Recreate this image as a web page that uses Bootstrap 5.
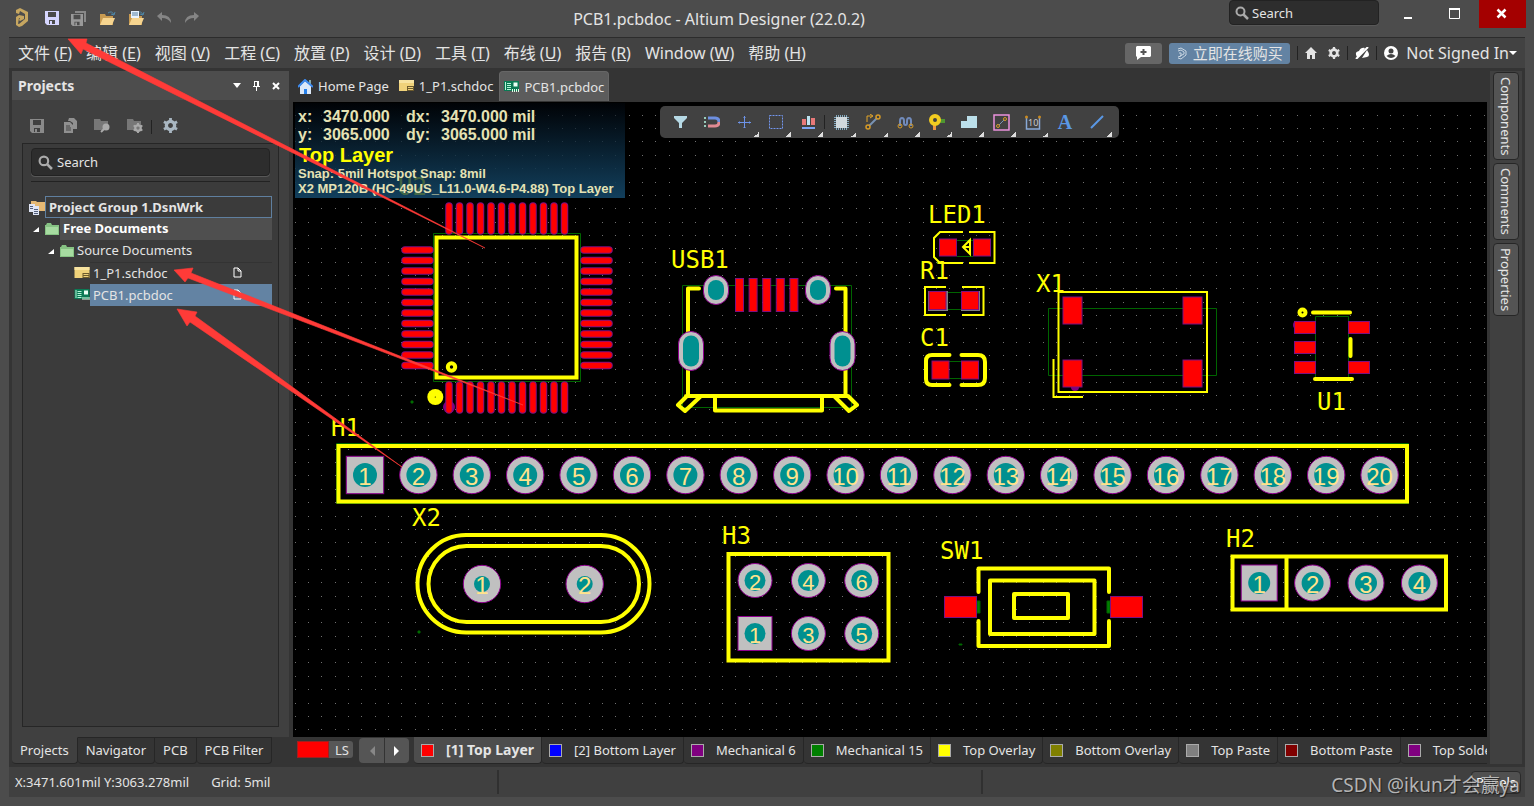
<!DOCTYPE html>
<html lang="zh-CN">
<head>
<meta charset="utf-8">
<meta name="viewport" content="width=device-width, initial-scale=1">
<title>PCB1.pcbdoc - Altium Designer (22.0.2)</title>
<link href="https://cdn.jsdelivr.net/npm/bootstrap@5.3.0/dist/css/bootstrap.min.css" rel="stylesheet">
<style>
:root{--frame:#4c4c4c;--bar:#404040;--deep:#343434;--line:#262626;--blue:#6383a3;--ink:#e4e4e4}
body{background:var(--frame);color:var(--ink);font:13px/20px "Noto Sans","Noto Sans CJK SC",sans-serif;min-height:100vh;overflow-x:hidden}
button{font:inherit;color:inherit;background:none;border:0;padding:0}
a{color:inherit;text-decoration:none}
svg{display:block;flex-shrink:0}
input{font:inherit;color:var(--ink);background:none;border:0;outline:0;min-width:0;padding:0}
input::placeholder{color:var(--ink);opacity:1}
.titlebar{height:37px;padding-left:14px;padding-right:8px}
.titlebar h1{font-size:16px;line-height:20px;margin:0;padding-right:96px;top:9px;left:0;right:0;pointer-events:none}
.quick{gap:12px}
.quick button:first-of-type{margin-left:1px}
.find{background:#2d2d2d;border:1px solid #222;border-radius:4px;box-shadow:0 1px 0 #585858}
.find input{line-height:18px}
.find-top{width:150px;height:25px;padding-left:5px;gap:3px;margin-right:6px}
.winbtn{width:47px;height:28px}
.shell{margin:0 9px;background:var(--deep)}
.menubar{height:31px;background:#424242;border-top:1px solid #2c2c2c;padding:0 8px 0 9px;font-size:16px}
.menus{gap:14px}
.account{gap:7px}
.chip{height:21px;border-radius:3px;background:#666}
.buy{background:var(--blue);width:121px;gap:6px;font-size:15px}
.rule{width:1px;height:14px;background:#222}
.work{padding:3px;gap:4px}
.side{width:277px}
.side-head{height:29px;background:#4d4d4d;padding:0 9px 0 6px;font-size:14px;gap:12px}
.side-body{background:var(--bar);padding:10px}
.side-tools{height:33px;gap:16px;padding-left:8px}
.side-tools button{margin-bottom:2px}
.side-tools .rule{margin-left:-8px;margin-right:-5px}
.tree-box{border:1px solid var(--line);background:#3b3b3b;padding:4px 6px}
.find-tree{height:28px;padding-left:6px;gap:4px;margin:0 2px}
.tree-rule{height:1px;background:#222;margin:5px 2px 14px}
.tree-row{height:22px}
.tree-row>.cell-fill{height:22px;padding-left:3px;flex:1 1 auto}
.doc-row{padding-left:45px}
.doc-row .cell-fill{border-top:1px solid #333;padding-right:30px;padding-bottom:2px}
.doc-row.on .cell-fill{background:var(--blue);border-color:var(--blue)}
.tabs button{height:27px;border:1px solid var(--line);border-left-width:0;border-radius:0 0 4px 4px;padding:0 8px 2px;background:var(--deep)}
.tabs button.on{background:var(--bar);border-top-color:transparent}
.doc-tabs{height:31px;padding-right:2px}
.doc-tab{height:30px;padding:0 5px;gap:5px}
.doc-tab.on{background:#5c5c5c;border:1px solid #666;border-bottom:0;border-radius:4px 4px 0 0;padding:0 4px;margin-left:1px}
.board{background:#000}
.hud{left:2px;top:1px;width:330px;height:95px;padding:5px 3px;background:linear-gradient(rgba(0,4,10,.6),#123f5c);color:#e5e2b4;font:bold 16px/18px "Liberation Sans",sans-serif}
.hud .xy{display:grid;grid-template-columns:25px 83px 35px auto;justify-content:start}
.hud .lay{font-size:20px;line-height:22px;color:#ff0;padding-left:1px}
.hud .sub{font-size:13px;line-height:15px;white-space:nowrap}
.tools{left:367px;top:4px;height:32px;width:459px;background:#414141;border-radius:5px;padding:0 4px}
.tools button{width:32px;height:32px}
.tools button svg{margin:0 auto}
.tools .more::after{content:"";position:absolute;right:1px;bottom:1px;width:5px;height:5px;background:linear-gradient(135deg,transparent 50%,#ddd 50%)}
.tools .letter{font:bold 20px/32px "Liberation Serif",serif;color:#5a98e5}
.layer-bar{height:27px;overflow:hidden}
.ls{width:57px;height:17px;margin:4px 5px 0 4px}
.ls span{width:24px;background:#575757;border-radius:0 3px 3px 0;padding-left:2px;line-height:18px}
.ls i{width:32px;background:red;border:1px solid #a02020}
.pager{width:50px;height:25px;margin-top:1px;margin-right:5px;background:#555;border-radius:4px}
.pager button{width:25px}
.pager button+button{border-left:1px solid #333}
.layer{height:27px;border-right:1px solid var(--line);border-bottom:1px solid var(--line);border-radius:0 0 4px 4px;padding:0 7px;gap:12px;white-space:nowrap;flex-shrink:0}
.layer.on{background:#4d4d4d;font-weight:bold;font-size:14px}
.layer i{width:13px;height:13px;border:1px solid #aaa}
.dock{width:32px;background:var(--bar);margin-left:-1px;padding:1px 3px;gap:3px}
.dock button{writing-mode:vertical-rl;width:26px;border:1px solid #262626;border-radius:4px;background:#545454;line-height:24px;padding:4px 0}
.status{height:30px;background:var(--bar);padding:0 4px 0 6px}
.status .rule{width:2px;height:24px;background:#303030}
.coords{width:32%;gap:22px;white-space:nowrap}
.hint{width:32%}
.panels{width:50px;height:23px;background:#505050;border:1px solid #2a2a2a;border-radius:4px;color:#fff}
.mark-text{right:14px;bottom:9px;font-size:19px;line-height:24px;color:rgba(205,205,205,.85);text-shadow:1px 1px 1px #222;pointer-events:none}
.notes{left:0;top:0;width:100%;pointer-events:none}
.foot{height:9px}
.lbl{font:24px "DejaVu Sans Mono",monospace;fill:#ff0}
.num{font:24px "Liberation Sans",sans-serif;fill:#ffe38c;text-anchor:middle}
.num.sm{font-size:22px}
.pad{fill:red;stroke:#7d1080}
.hole{fill:silver;stroke:#8e008e}
.drill{fill:#009090}
.silk{fill:none;stroke:#ff0;stroke-width:4;stroke-linejoin:round;stroke-linecap:round}
.silk.sharp{stroke-linejoin:miter}
.thin{fill:none;stroke:#ff0;stroke-width:2}
.body3{fill:none;stroke:#006400;stroke-width:1}
.ghost{fill:#6a8a3a;opacity:.55}
</style>
</head>
<body class="d-flex flex-column position-relative">
<svg width="0" height="0" class="position-absolute" aria-hidden="true">
 <symbol id="disk" viewBox="0 0 14 14"><path fill="currentColor" fill-rule="evenodd" d="M0 0h14v14H2l-2-2zM3 1v5h8V1zM4 9v4h6V9zM5 10h2v3H5z"/></symbol>
 <symbol id="sch" viewBox="0 0 15 12"><path d="M0 0h15v11H0z" fill="#f0d27a"/><path d="M0 0h15v3H0z" fill="#f7e3a0"/><path d="M8 6h7v5H8z" fill="#6c5a2c"/><path d="M9 7h5v1H9zM9 9h5v1H9z" fill="#f0d27a"/></symbol>
 <symbol id="pcb" viewBox="0 0 15 12"><path d="M0 0h15v10H0z" fill="#0b7a55"/><path d="M1.500 1v8M3 2.500h4M3 4.500h4M3 6.500h4M3 8.500h4" stroke="#b5f5d8" fill="none"/><path d="M9.500 1.500h4v4h-4z" fill="#eafff5"/><path d="M8.500 8v3M10.500 8v3M12.500 8v3M14.500 8v3" stroke="#dfffe8"/></symbol>
 <symbol id="lens" viewBox="0 0 14 14"><circle cx="5.500" cy="5.500" r="4" fill="none" stroke="#aaa" stroke-width="2"/><path d="M8.500 8.500l4.500 4.500" stroke="#aaa" stroke-width="2.500"/></symbol>
 <symbol id="gear" viewBox="-8 -8 16 16"><circle r="4.400" fill="none" stroke="currentColor" stroke-width="3.600"/><g stroke="currentColor" stroke-width="3"><path d="M0-8v3M0 5v3M-7-4l2.600 1.500M4.400 2.500l2.600 1.500M-7 4l2.600-1.500M4.400-2.500l2.600-1.500"/></g></symbol>
 <symbol id="folder" viewBox="0 0 14 12"><path d="M0 2h1l1-2h4l1 2h7v10H0z" fill="#86c283"/><path d="M1 4h12v7H1z" fill="#a6dba0"/></symbol>
 <symbol id="house" viewBox="0 0 12 12"><path d="M6 0l6 6h-2v6H7V8H5v4H2V6H0z" fill="currentColor"/></symbol>
 <symbol id="open" viewBox="0 0 17 15"><path d="M1 3h5l1 2h7v9H1z" fill="#c99b51"/><path d="M4 7h12l-3 7H1z" fill="#f6d48f"/><path d="M9 2q4-3 6 2m0 0l1-3m-1 3l-3-1" stroke="#4e87a8" fill="none"/></symbol>
</svg>

<header class="titlebar d-flex align-items-start position-relative">
 <h1 class="position-absolute text-center fw-normal">PCB1.pcbdoc - Altium Designer (22.0.2)</h1>
 <div class="quick d-flex align-items-center pt-2">
  <svg width="18" height="20" viewBox="0 0 18 20"><path d="M2 5V2l4-2 8 4v9l-6 5-3 1-3-2v-2l3 1 6-5V6L6 3 5 6zM2 9l3-2 5 1v3l-4 2-1-1 1-2H5l-1 6-2-1z" fill="#c6a660"/></svg>
  <button aria-label="Save" style="color:#d6d6ff"><svg width="14" height="14"><use href="#disk"/></svg></button>
  <button aria-label="Save all" style="color:#999"><svg width="16" height="16" viewBox="0 0 16 16"><path d="M4 1h11v11h-2V3H4z" fill="#888"/><svg y="4" width="12" height="12"><use href="#disk"/></svg></svg></button>
  <button aria-label="Open"><svg width="17" height="15"><use href="#open"/></svg></button>
  <button aria-label="Open project"><svg width="17" height="15" viewBox="0 0 17 15"><use href="#open"/><path d="M3 0h8v7H3z" fill="#e9f4ff"/><path d="M4 2h6M4 4h6" stroke="#557fa0"/></svg></button>
  <button aria-label="Undo"><svg width="15" height="12" viewBox="0 0 15 12"><path d="M0 4l5-4v3q9 0 9 8-3-5-9-5v3z" fill="#858585"/></svg></button>
  <button aria-label="Redo"><svg width="15" height="12" viewBox="0 0 15 12"><path d="M15 4l-5-4v3Q1 3 1 11q3-5 9-5v3z" fill="#858585"/></svg></button>
 </div>
 <label class="find find-top d-flex align-items-center ms-auto position-relative"><svg width="14" height="14"><use href="#lens"/></svg><input class="flex-fill" type="search" placeholder="Search" aria-label="Search"></label>
 <button class="winbtn" aria-label="Minimize"><svg width="47" height="28"><path d="M19 18h8" stroke="#fff" stroke-width="2"/></svg></button>
 <button class="winbtn" aria-label="Maximize"><svg width="47" height="28"><path d="M17.500 9.500h10v9h-10z" fill="none" stroke="#fff"/><path d="M17 9h11" stroke="#fff" stroke-width="2"/></svg></button>
 <button class="winbtn" aria-label="Close" style="background:#a40000"><svg width="47" height="28"><path d="M18.500 9.500l8 8m0-8l-8 8" stroke="#fff" stroke-width="2.500"/></svg></button>
</header>

<div class="shell d-flex flex-column flex-fill">
 <nav class="menubar d-flex align-items-center">
  <div class="menus d-flex" id="menus"></div>
  <div class="account d-flex align-items-center ms-auto">
   <button class="chip px-2" aria-label="Feedback" style="width:37px"><svg class="m-auto" width="17" height="14" viewBox="0 0 17 14"><path d="M2 0h13l1 1v9l-1 1H6l-4 3v-3l-1-1V1z" fill="#fff"/><path d="M8.500 3v6M5.500 6h6" stroke="#555" stroke-width="2"/></svg></button>
   <button class="chip buy d-flex align-items-center justify-content-center"><svg width="10" height="13" viewBox="0 0 10 13"><path d="M1 2l3-1 5 3v4l-5 4-3-1M1 4l3-1 3 2v2L3 9M2 6h2v3l-3 1" stroke="#c9d6e2" fill="none"/></svg>立即在线购买</button>
   <span class="rule"></span>
   <button aria-label="Home"><svg width="12" height="12"><use href="#house"/></svg></button>
   <button aria-label="Settings" class="ms-1"><svg width="12" height="12"><use href="#gear"/></svg></button>
   <span class="rule"></span>
   <button aria-label="Offline"><svg width="14" height="12" viewBox="0 0 14 12"><path d="M2 10q-3-5 2-6 2-4 6-3L4 10zM7 11l5-8q4 6 0 7z" fill="#fff"/><path d="M1 12L13 0" stroke="#fff" stroke-width="2"/></svg></button>
   <span class="rule"></span>
   <button class="d-flex align-items-center"><svg class="me-2" width="14" height="14" viewBox="0 0 14 14"><circle cx="7" cy="7" r="7" fill="#fff"/><circle cx="7" cy="5" r="2.500" fill="#424242"/><path d="M2.500 10q4.500-4 9 0-4.500 4-9 0" fill="#424242"/></svg>Not Signed In<svg width="8" height="5"><path d="M0 0h8L4 4z" fill="#fff"/></svg></button>
  </div>
 </nav>

 <main class="work d-flex align-items-stretch flex-fill">
  <aside class="side d-flex flex-column flex-shrink-0">
   <div class="side-head d-flex align-items-center"><b class="me-auto">Projects</b>
    <button aria-label="Menu"><svg width="8" height="6"><path d="M0 0h8L4 5z" fill="#fff"/></svg></button>
    <button aria-label="Pin"><svg width="7" height="10" viewBox="0 0 7 10"><path d="M1 0h5v5h1v1H4v4H3V6H0V5h1zM2 1v4h2V1z" fill="#fff"/></svg></button>
    <button aria-label="Close panel"><svg width="8" height="8"><path d="M1 1l6 6m0-6L1 7" stroke="#fff" stroke-width="2"/></svg></button></div>
   <div class="side-body d-flex flex-column flex-fill">
    <div class="side-tools d-flex align-items-center" style="color:#8a8a8a">
     <button aria-label="Save document"><svg width="14" height="14"><use href="#disk"/></svg></button>
     <button aria-label="Compile"><svg class="ms-1" width="14" height="15" viewBox="0 0 14 15"><path d="M5 0h5l3 3v8H9V5L6 3H4zM0 4h6l3 3v8H0z" fill="#909090"/><path d="M2 8h4M2 10h5M2 12h5" stroke="#444"/></svg></button>
     <button aria-label="Explore"><svg width="17" height="14" viewBox="0 0 17 14"><path d="M0 0h6l1 2h7v9H0z" fill="#777"/><circle cx="12" cy="8" r="3.500" fill="#aaa"/><path d="M10 10l-3 3" stroke="#aaa" stroke-width="2"/></svg></button>
     <button aria-label="Options"><svg width="16" height="14" viewBox="0 0 16 14"><path d="M0 0h6l1 2h7v9H0z" fill="#777"/><svg x="6" y="4" width="10" height="10" color="#aaa"><use href="#gear"/></svg></svg></button>
     <span class="rule"></span>
     <button aria-label="Panel settings" style="color:#a9b7c2"><svg width="15" height="15"><use href="#gear"/></svg></button>
    </div>
    <div class="tree-box flex-fill">
     <label class="find find-tree d-flex align-items-center"><svg width="15" height="15"><use href="#lens"/></svg><input type="search" class="flex-fill" placeholder="Search" aria-label="Search projects"></label>
     <div class="tree-rule"></div>
     <div class="tree-row d-flex align-items-center fw-bold"><svg width="16" height="15" viewBox="0 0 16 15"><path d="M2 1h5l1 1h8v9H2z" fill="#e5b873"/><path d="M0 4h6v8H0zM4 6h6v9H4z" fill="#dfe5f5"/><path d="M1 6.500h3M1 8.500h3M5 9.500h4M5 11.500h4M5 13.500h4" stroke="#53607c"/></svg><span class="cell-fill" style="border:1px solid #5f7f9f">Project Group 1.DsnWrk</span></div>
     <div class="tree-row d-flex align-items-center fw-bold text-white"><svg width="16" height="12"><path d="M10 4v5H4z" fill="#fff"/></svg><svg class="me-1" width="14" height="12"><use href="#folder"/></svg><span class="cell-fill" style="background:#4f4f4f;margin-left:-3px">Free Documents</span></div>
     <div class="tree-row d-flex align-items-center"><svg width="31" height="12"><path d="M25 4v5h-6z" fill="#fff"/></svg><svg width="14" height="12"><use href="#folder"/></svg><span class="cell-fill">Source Documents</span></div>
     <div class="tree-row doc-row d-flex align-items-center"><svg width="16" height="12"><use href="#sch"/></svg><span class="cell-fill d-flex align-items-center">1_P1.schdoc<svg class="ms-auto" width="9" height="11"><path d="M1 1h4l3 3v6H1zM5 1v3h3" fill="none" stroke="#fff"/></svg></span></div>
     <div class="tree-row doc-row on d-flex align-items-center"><svg width="16" height="12"><use href="#pcb"/></svg><span class="cell-fill d-flex align-items-center">PCB1.pcbdoc<svg class="ms-auto" width="9" height="11"><path d="M1 1h4l3 3v6H1zM5 1v3h3" fill="none" stroke="#fff"/></svg></span></div>
    </div>
   </div>
   <div class="tabs d-flex"><button class="on">Projects</button><button>Navigator</button><button>PCB</button><button>PCB Filter</button></div>
  </aside>

  <section class="flex-fill d-flex flex-column" style="min-width:0">
   <div class="doc-tabs d-flex align-items-start">
    <button class="doc-tab d-flex align-items-center"><svg width="15" height="15" viewBox="0 0 15 15"><path d="M2 7l5-5 6 5v8H2z" fill="#dce8f8"/><path d="M11 1h2v5h-2z" fill="#8aa"/><path d="M0 8l7-7 8 7" fill="none" stroke="#3d8bf0" stroke-width="2"/><path d="M6 10h3v5H6z" fill="#2680eb"/></svg>Home Page</button>
    <button class="doc-tab d-flex align-items-center"><svg width="15" height="12"><use href="#sch"/></svg>1_P1.schdoc</button>
    <button class="doc-tab on d-flex align-items-center"><svg width="15" height="12"><use href="#pcb"/></svg>PCB1.pcbdoc</button>
   </div>
   <div class="board position-relative flex-fill">
    <svg id="pcbview" class="w-100" viewBox="293 102 1194 635" preserveAspectRatio="xMinYMin meet">
     <path id="dots" stroke="#707070" fill="none" shape-rendering="crispEdges"/>
     <g class="body3">
      <path d="M433.500 233.500h147v148h-147zM682.500 285.500h169v122h-169zM957 240.500h16M957 256.500h16M946 292.500h16M946 309.500h16M949 361.500h13M949 378.500h13M1048.500 308.500h168v67h-168zM1315.500 316.500h33v61h-33zM336.500 443.500h1072v60h-1072z"/>
      <path d="M977 601h3v12h-3zM1107 601h3v12h-3z" fill="#008000"/><path d="M411 401h2v2h-2zM418 631h2v2h-2zM959 644h3v1h-3z" fill="#008000"/>
     </g>
     <g fill="#80007f"><circle cx="449" cy="407" r="6"/><circle cx="1075" cy="387" r="4"/><circle cx="1297" cy="325" r="4"/></g>
     <g class="silk sharp"><path d="M436.500 237.500h140v140h-140zM338.500 446h1068.500v55.500H338.500zM728.500 554h160v106.500h-160zM1232.500 556.500h213.500v53h-213.500zM1286.500 557v52"/></g>
     <g class="silk">
      <path d="M699 288.500h-11V395M836 288.500h9.500V395M686 396h162M715 396v14.500h107V396M686 397l-8 8 7 6 15-14M848 396l9 9-8 6-14-14"/>
      <path d="M949.500 355H932q-6 0-6 6v18q0 6 6 6h17.500M961.500 355H978q7 0 7 7v16q0 7-7 7h-16.500"/>
      <path d="M1313 312.500h37M1315 379h37M1350.500 339v17"/>
      <rect x="417.500" y="535" width="232" height="97.500" rx="48.700"/><rect x="428.500" y="546" width="210.500" height="76" rx="38"/>
      <path d="M978.500 592v-23.500h130.500V592M978.500 621v25h130.500v-25M990 580.500h104.500v53.500H990zM1014 594h54v24h-54z"/>
      <circle cx="451.500" cy="367" r="3.700"/><circle cx="1302.500" cy="312.500" r="3"/>
     </g>
     <circle cx="435.300" cy="397" r="8" fill="#ff0"/><circle cx="435.300" cy="397" r=".6"/>
     <g class="thin"><path d="M963 232h-23l-6 6v19l6 6h23M969 232h25.500v31H969M946 287h-21v28h21M962 287h21.500v28H962M1058.500 292h148.500v100h-148.500zM1053.500 359v38h29.500M963 247l7-7v14zM963 247h7"/></g>
     <path d="M928 291h20v20h-20zM961 291h19v20h-19z" fill="#808080"/>
     <g id="pads"></g>
     <g class="lbl"><text x="671" y="268">USB1</text><text x="928" y="223">LED1</text><text x="920" y="279">R1</text><text x="920" y="346">C1</text><text x="1036" y="292">X1</text><text x="1317" y="410">U1</text><text x="331" y="436">H1</text><text x="412" y="526">X2</text><text x="722" y="544">H3</text><text x="940" y="559">SW1</text><text x="1226" y="547">H2</text></g>
    </svg>
    <div class="hud position-absolute">
     <svg class="position-absolute top-0 start-0" width="330" height="95"><text x="103" y="92" class="lbl ghost">U2</text></svg>
     <div class="position-relative">
      <div class="xy"><span>x:</span><span>3470.000</span><span>dx:</span><span>3470.000 mil</span><span>y:</span><span>3065.000</span><span>dy:</span><span>3065.000 mil</span></div>
      <div class="lay">Top Layer</div><div class="sub">Snap: 5mil Hotspot Snap: 8mil</div><div class="sub">X2 MP120B (HC-49US_L11.0-W4.6-P4.88) Top Layer</div>
     </div>
    </div>
    <div class="tools position-absolute d-flex align-items-center">
     <button aria-label="Filter"><svg width="13" height="12" viewBox="0 0 13 12"><path d="M0 0h13v2L8 7v5H5V7L0 2z" fill="#b6d9e5"/></svg></button>
     <button aria-label="Snap"><svg width="16" height="13" viewBox="0 0 16 13"><path d="M4 2h7q4 0 4 4" stroke="#6d8fe0" stroke-width="3" fill="none"/><path d="M15 6q0 4-4 4H4" stroke="#e08a93" stroke-width="3" fill="none"/><path d="M1 1v2M1 5v2M1 9v2" stroke="#9cb" stroke-width="2"/></svg></button>
     <button class="more position-relative" aria-label="Place"><svg width="14" height="14"><path d="M7.500 1v12M1 7.500h13" stroke="#6d93e8"/><path d="M6 2.500h3M6 12.500h3M2.500 6v3M12.500 6v3" stroke="#6d93e8" stroke-opacity=".5"/></svg></button>
     <button class="more position-relative" aria-label="Select"><svg width="15" height="15"><path d="M.5.500h13v13H.5z" fill="none" stroke="#7396ee" stroke-dasharray="2 1"/></svg></button>
     <button class="more position-relative" aria-label="Align"><svg width="13" height="13"><path d="M0 3h4v6H0zM9 2h4v7H9z" fill="#e87979"/><path d="M5 0h3v9H5z" fill="#bce3f1"/><path d="M0 12h13" stroke="#7da5f5" stroke-width="2"/></svg></button>
     <span class="rule"></span>
     <button class="more position-relative" aria-label="Component"><svg width="15" height="15"><path d="M2.500 0v15M4.500 0v15M6.500 0v15M8.500 0v15M10.500 0v15M12.500 0v15M0 2.500h15M0 4.500h15M0 6.500h15M0 8.500h15M0 10.500h15M0 12.500h15" stroke="#85abc0"/><path d="M2 2h11v11H2z" fill="#d1d9dd"/></svg></button>
     <button class="more position-relative" aria-label="Route"><svg width="16" height="16"><path d="M2 8V2h5M5 0l3 2-3 2" stroke="#e1a52b" fill="none"/><path d="M4 12l8-8" stroke="#7892b4" stroke-width="2"/><g fill="none" stroke="#d69a26" stroke-width="1.500"><circle cx="3" cy="13" r="2"/><circle cx="13" cy="3" r="2"/></g></svg></button>
     <button class="more position-relative" aria-label="Tune"><svg width="17" height="13"><path d="M3 10V5q0-3 2-3t2 3v2q0 2 1.500 2T10 7V5q0-3 2-3t2 3v5" stroke="#718bbb" stroke-width="2" fill="none"/><g fill="none" stroke="#d69a26"><circle cx="3" cy="10" r="2"/><circle cx="14" cy="10" r="2"/></g></svg></button>
     <button class="more position-relative" aria-label="Via"><svg width="17" height="16"><path d="M9 5h7v4H9z" fill="#4e9631"/><path d="M4 10h3v6H4z" fill="#ed9641"/><circle cx="6" cy="6" r="4" fill="none" stroke="#f3cc20" stroke-width="4"/></svg></button>
     <button class="more position-relative" aria-label="Polygon"><svg width="16" height="12"><path d="M0 5h6V0h10v12H0z" fill="#bbdfea"/></svg></button>
     <button class="more position-relative" aria-label="Keepout"><svg width="17" height="17"><path d="M1 1h15v15H1z" fill="none" stroke="#ea91dc" stroke-width="1.500"/><path d="M6 11l5-5" stroke="#7892b4"/><g fill="none" stroke="#d69a26"><circle cx="5" cy="12" r="1.500"/><circle cx="12" cy="5" r="1.500"/></g></svg></button>
     <button class="more position-relative" aria-label="Dimension"><svg width="16" height="15"><path d="M1.500 3v11h13V3" fill="none" stroke="#88a9d7" stroke-width="1.500"/><circle cx="1.500" cy="2" r="1.500" fill="#c98b20"/><circle cx="14.500" cy="2" r="1.500" fill="#c98b20"/><text x="3" y="11" font-size="9" fill="#ccc">10</text></svg></button>
     <button class="letter" aria-label="Text">A</button>
     <button class="more position-relative" aria-label="Line"><svg width="14" height="14"><path d="M1 13L13 1" stroke="#5a98e5" stroke-width="2"/></svg></button>
    </div>
   </div>
   <div class="layer-bar d-flex align-items-start">
    <button class="ls d-flex flex-shrink-0" aria-label="Layer set"><i></i><span>LS</span></button>
    <div class="pager d-flex flex-shrink-0"><button aria-label="Previous"><svg class="m-auto" width="6" height="10"><path d="M6 0v10L1 5z" fill="#888"/></svg></button><button aria-label="Next"><svg class="m-auto" width="6" height="10"><path d="M0 0v10l5-5z" fill="#fff"/></svg></button></div>
    <div id="layers" class="d-flex"></div>
   </div>
  </section>

  <div class="dock d-flex flex-column align-items-start flex-shrink-0"><button>Components</button><button>Comments</button><button>Properties</button></div>
 </main>

 <footer class="status d-flex align-items-center"><div class="coords d-flex"><span>X:3471.601mil Y:3063.278mil</span><span>Grid: 5mil</span></div><span class="rule"></span><span class="hint"></span><span class="rule"></span><button class="panels ms-auto">Panels</button></footer>
</div>
<div class="foot"></div>

<svg class="notes position-absolute" viewBox="0 0 1534 806" fill="#ff3b38" stroke="#ff3b38" stroke-width=".6" aria-hidden="true">
 <path d="M68 39l19 0-1 4L485 248 83 49l-2 5z"/><path d="M174 270l19-2-2 5 332 132L188 278l-3 4z"/><path d="M177 309l20 3-2 4 207 151L190 322l-3 4z"/>
</svg>
<div class="mark-text position-absolute">CSDN @ikun才会赢ya</div>

<script src="https://cdn.jsdelivr.net/npm/bootstrap@5.3.0/dist/js/bootstrap.bundle.min.js"></script>
<script>
const menus = [['文件','F'],['编辑','E'],['视图','V'],['工程','C'],['放置','P'],['设计','D'],['工具','T'],['布线','U'],['报告','R'],['Window','W'],['帮助','H']];
document.getElementById('menus').innerHTML = menus.map(([n,k]) => `<a href="#">${n} (<u>${k}</u>)</a>`).join('');

const layers = [['[1] Top Layer','#f00'],['[2] Bottom Layer','#00f'],['Mechanical 6','#800080'],['Mechanical 15','#008000'],['Top Overlay','#ff0'],['Bottom Overlay','#808000'],['Top Paste','#808080'],['Bottom Paste','#800000'],['Top Solder','#800080']];
document.getElementById('layers').innerHTML = layers.map(([n,c],i) => `<button class="layer d-flex align-items-center ${i?'':'on'}"><i style="background:${c}"></i>${n}</button>`).join('');

// snap grid
let d = '';
for (let y = 114.700; y < 737; y += 13.360) for (let x = 294.600; x < 1487; x += 13.360) d += `M${Math.round(x)} ${Math.round(y)+.5}h1`;
document.getElementById('dots').setAttribute('d', d);

// pads
let p = '';
const smd = (x,y,w,h) => p += `<rect class="pad" x="${x}" y="${y}" width="${w}" height="${h}"/>`;
const slot = (x1,y1,x2,y2) => p += `<g stroke-linecap="round"><path d="M${x1} ${y1}L${x2} ${y2}" stroke="#7d1080" stroke-width="7.500"/><path d="M${x1} ${y1}L${x2} ${y2}" stroke="red" stroke-width="5.500"/></g>`;
const thru = (x,y,r,t,n,sq,sm) => p += (sq ? `<rect class="hole" x="${x-r}" y="${y-r}" width="${2*r}" height="${2*r}"/>` : `<circle class="hole" cx="${x}" cy="${y}" r="${r}"/>`) + `<circle class="drill" cx="${x}" cy="${y}" r="${t}"/><text class="num${sm?' sm':''}" x="${x}" y="${y+(sm?9:10)}">${n}</text>`;
const oval = (x,y,w,h,a,b) => p += `<rect class="hole" x="${x-w/2}" y="${y-h/2}" width="${w}" height="${h}" rx="${w/2}"/><rect class="drill" x="${x-a/2}" y="${y-b/2}" width="${a}" height="${b}" rx="${a/2}"/>`;
for (let i = 0; i < 12; i++) { const k = i*10.500; slot(449+k,206,449+k,231); slot(449+k,385,449+k,410); slot(405,250+k,430,250+k); slot(584,250+k,609,250+k); }
for (let i = 0; i < 5; i++) smd(735.500+i*13.600,278.500,8,33);
oval(716,290,25,29,16,20); oval(818,290,25,29,16,20); oval(691,351,25,39,16,31); oval(842.500,351,25,39,16,31);
smd(939.500,239,17,17); smd(973.500,239,17,17); smd(929,291.500,17,18); smd(961.500,291.500,17,18); smd(932,361,17,18); smd(961.500,361,17,18);
for (const x of [1063,1183]) { smd(x,297,19,27); smd(x,360,19,27); }
for (const y of [321.500,341.500,361.500]) smd(1294.500,y,21,12);
smd(1348.500,321.500,21,12); smd(1348.500,361.500,21,12);
smd(944.500,596.500,32,21); smd(1110.500,596.500,32,21);
for (let i = 0; i < 20; i++) thru(365+i*53.400,475,18.700,12,i+1,i===0);
thru(482,584,18.700,8,1); thru(584.700,584,18.700,8,2);
[[755,633.500,1],[755,580.500,2],[808.400,633.500,3],[808.400,580.500,4],[861.700,633.500,5],[861.700,580.500,6]].forEach(([x,y,n]) => thru(x,y,17,10.500,n,n===1,true));
for (let i = 0; i < 4; i++) thru(1259.200+i*53.400,583,18,11,i+1,i===0);
document.getElementById('pads').innerHTML = p;
</script>
</body>
</html>
